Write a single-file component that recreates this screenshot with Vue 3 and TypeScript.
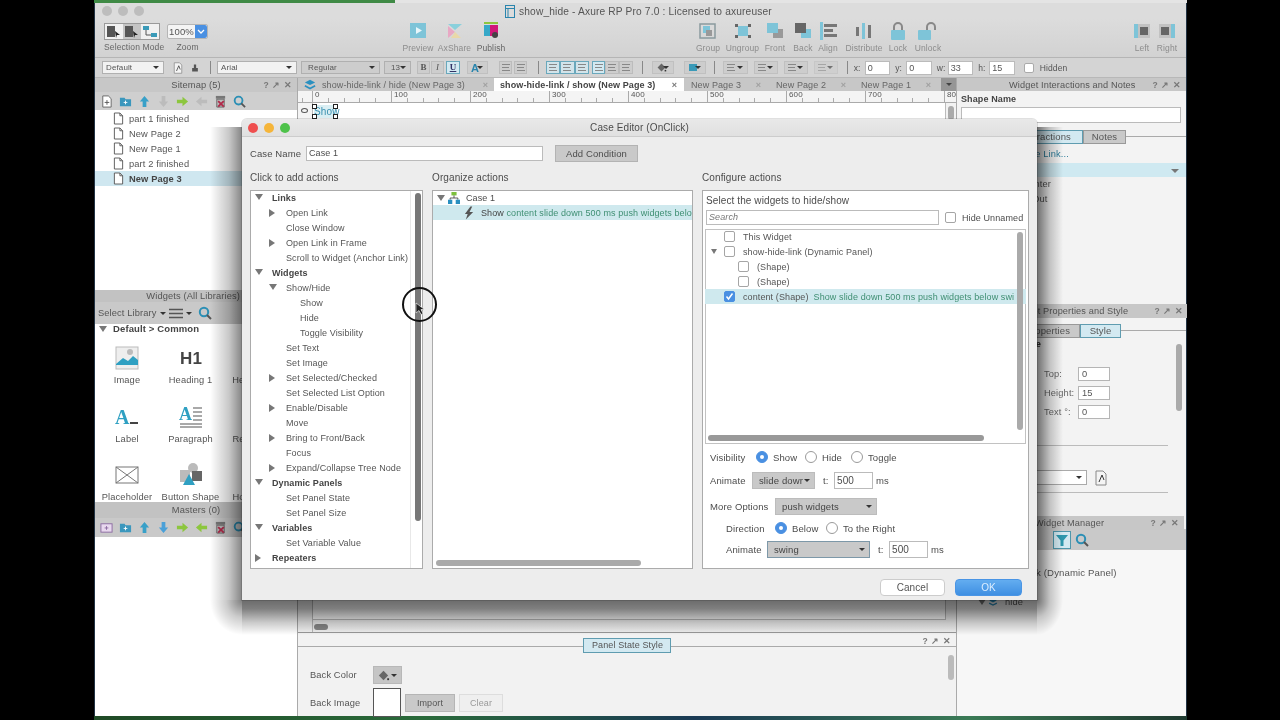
<script setup lang="ts">
interface Tool { label: string; icon: string; w: number }
interface TreeRow { text: string; lv: number; arrow?: 'down' | 'right'; bold?: boolean }

const toolsA: Tool[] = [
  { label: 'Preview', icon: 'preview', w: 36 },
  { label: 'AxShare', icon: 'axshare', w: 37 },
  { label: 'Publish', icon: 'publish', w: 36 },
]
const toolsB: Tool[] = [
  { label: 'Group', icon: 'group', w: 34 },
  { label: 'Ungroup', icon: 'ungroup', w: 35 },
  { label: 'Front', icon: 'front', w: 30 },
  { label: 'Back', icon: 'back', w: 26 },
  { label: 'Align', icon: 'align', w: 24 },
  { label: 'Distribute', icon: 'distribute', w: 48 },
  { label: 'Lock', icon: 'lock', w: 20 },
  { label: 'Unlock', icon: 'unlock', w: 40 },
]
const toolsC: Tool[] = [
  { label: 'Left', icon: 'pane-left', w: 24 },
  { label: 'Right', icon: 'pane-right', w: 26 },
]
const pages = ['part 1 finished', 'New Page 2', 'New Page 1', 'part 2 finished', 'New Page 3']
const sitemapIcons = ['i-addpage', 'i-folder', 'i-up', 'i-down-off', 'i-right', 'i-left-off', 'i-delete', 'i-search']
const masterIcons = ['i-addmaster', 'i-folder', 'i-up', 'i-down', 'i-right', 'i-left', 'i-delete', 'i-search']
const rulerMarks = [0, 100, 200, 300, 400, 500, 600, 700, 800]
const widgets = [
  { label: 'Image', icon: 'w-image' }, { label: 'Heading 1', icon: 'w-h1' }, { label: 'Heading 2', icon: 'w-h1' },
  { label: 'Label', icon: 'w-label' }, { label: 'Paragraph', icon: 'w-para' }, { label: 'Rectangle', icon: 'w-para' },
  { label: 'Placeholder', icon: 'w-place' }, { label: 'Button Shape', icon: 'w-button' }, { label: 'Horizontal', icon: 'w-button' },
]
const actions: TreeRow[] = [
  { text: 'Links', lv: 0, arrow: 'down', bold: true },
  { text: 'Open Link', lv: 1, arrow: 'right' },
  { text: 'Close Window', lv: 1 },
  { text: 'Open Link in Frame', lv: 1, arrow: 'right' },
  { text: 'Scroll to Widget (Anchor Link)', lv: 1 },
  { text: 'Widgets', lv: 0, arrow: 'down', bold: true },
  { text: 'Show/Hide', lv: 1, arrow: 'down' },
  { text: 'Show', lv: 2 },
  { text: 'Hide', lv: 2 },
  { text: 'Toggle Visibility', lv: 2 },
  { text: 'Set Text', lv: 1 },
  { text: 'Set Image', lv: 1 },
  { text: 'Set Selected/Checked', lv: 1, arrow: 'right' },
  { text: 'Set Selected List Option', lv: 1 },
  { text: 'Enable/Disable', lv: 1, arrow: 'right' },
  { text: 'Move', lv: 1 },
  { text: 'Bring to Front/Back', lv: 1, arrow: 'right' },
  { text: 'Focus', lv: 1 },
  { text: 'Expand/Collapse Tree Node', lv: 1, arrow: 'right' },
  { text: 'Dynamic Panels', lv: 0, arrow: 'down', bold: true },
  { text: 'Set Panel State', lv: 1 },
  { text: 'Set Panel Size', lv: 1 },
  { text: 'Variables', lv: 0, arrow: 'down', bold: true },
  { text: 'Set Variable Value', lv: 1 },
  { text: 'Repeaters', lv: 0, arrow: 'right', bold: true },
]
const tabs = [
  { text: 'New Page 3' }, { text: 'New Page 2' }, { text: 'New Page 1' },
]
</script>

<template>
  <div class="stage">
    <svg class="defs" width="0" height="0" aria-hidden="true">
      <defs>
        <symbol id="i-page" viewBox="0 0 12 14"><path d="M1.500 1h6l3 3v9h-9z" fill="#fff" stroke="#555" stroke-width="1"/><path d="M7.500 1v3h3" fill="none" stroke="#555"/></symbol>
        <symbol id="i-addpage" viewBox="0 0 14 14"><path d="M3 1h6l3 3v9H3z" fill="#fff" stroke="#666"/><path d="M5 8h5M7.500 5.500v5" stroke="#555"/></symbol>
        <symbol id="i-addmaster" viewBox="0 0 14 14"><rect x="1" y="3" width="12" height="9" fill="#e8d8ee" stroke="#8a6aa0"/><path d="M5 7.500h4M7 5.500v4" stroke="#8a6aa0"/></symbol>
        <symbol id="i-folder" viewBox="0 0 14 14"><path d="M1 3h5l1 1.500h6V12H1z" fill="#3b97bd"/><path d="M5 8h4M7 6v4" stroke="#fff"/></symbol>
        <symbol id="i-up" viewBox="0 0 14 14"><path d="M7 1l5 6H9v6H5V7H2z" fill="#38a0c8"/></symbol>
        <symbol id="i-down" viewBox="0 0 14 14"><path d="M7 13l5-6H9V1H5v6H2z" fill="#4aa0d8"/></symbol>
        <symbol id="i-down-off" viewBox="0 0 14 14"><path d="M7 13l5-6H9V1H5v6H2z" fill="#bcbcbc"/></symbol>
        <symbol id="i-right" viewBox="0 0 14 14"><path d="M13 7L7 2v3H1v4h6v3z" fill="#8cc63e"/></symbol>
        <symbol id="i-left" viewBox="0 0 14 14"><path d="M1 7l6-5v3h6v4H7v3z" fill="#8cc63e"/></symbol>
        <symbol id="i-left-off" viewBox="0 0 14 14"><path d="M1 7l6-5v3h6v4H7v3z" fill="#bcbcbc"/></symbol>
        <symbol id="i-delete" viewBox="0 0 14 14"><path d="M2 1h10v3H2z" fill="#777"/><path d="M3 4.500h8V13H3z" fill="#bbb" stroke="#666"/><path d="M4.500 6.500l6 6M10.500 6.500l-6 6" stroke="#b02a4a" stroke-width="2"/></symbol>
        <symbol id="i-search" viewBox="0 0 14 14"><circle cx="6" cy="6" r="4.200" fill="none" stroke="#2b8fb5" stroke-width="2"/><path d="M9 9l4 4" stroke="#555" stroke-width="2"/></symbol>
        <symbol id="preview" viewBox="0 0 22 18"><rect x="3" y="1" width="16" height="15" fill="#7ec4d8"/><path d="M9 5l6 3.500L9 12z" fill="#e8f6fa"/></symbol>
        <symbol id="axshare" viewBox="0 0 22 18"><path d="M4 2h14l-7 6z" fill="#8ad0dc"/><path d="M4 4l7 6-7 6z" fill="#e8a8c4"/><path d="M11 10l6 6H7z" fill="#e9d8a8"/></symbol>
        <symbol id="publish" viewBox="0 0 22 18"><rect x="4" y="0" width="14" height="2" fill="#8cc63e"/><rect x="4" y="3" width="6" height="11" fill="#36a8c8"/><rect x="10" y="3" width="8" height="11" fill="#d01878"/><circle cx="15" cy="13" r="3" fill="#444"/></symbol>
        <symbol id="group" viewBox="0 0 22 18"><rect x="3" y="2" width="15" height="14" fill="none" stroke="#8a9a9e" stroke-width="1.500"/><rect x="6" y="4" width="7" height="7" fill="#7ec4d8"/><rect x="9" y="8" width="6" height="6" fill="#999"/></symbol>
        <symbol id="ungroup" viewBox="0 0 22 18"><rect x="6" y="4" width="10" height="10" fill="#7ec4d8"/><path d="M3 2h3v3H3zM16 2h3v3h-3zM3 13h3v3H3zM16 13h3v3h-3z" fill="#666"/></symbol>
        <symbol id="front" viewBox="0 0 22 18"><rect x="9" y="7" width="10" height="9" fill="#999"/><rect x="3" y="1" width="11" height="10" fill="#7ec4d8"/></symbol>
        <symbol id="back" viewBox="0 0 22 18"><rect x="9" y="7" width="10" height="9" fill="#7ec4d8"/><rect x="3" y="1" width="11" height="10" fill="#666"/></symbol>
        <symbol id="align" viewBox="0 0 22 18"><rect x="3" y="0" width="3" height="18" fill="#7ec4d8"/><rect x="7" y="2" width="13" height="3" fill="#777"/><rect x="7" y="7" width="9" height="3" fill="#777"/><rect x="7" y="12" width="13" height="3" fill="#777"/></symbol>
        <symbol id="distribute" viewBox="0 0 22 18"><rect x="3" y="5" width="3" height="9" fill="#777"/><rect x="9" y="1" width="3" height="16" fill="#7ec4d8"/><rect x="15" y="3" width="3" height="13" fill="#777"/></symbol>
        <symbol id="lock" viewBox="0 0 22 18"><rect x="4" y="8" width="14" height="10" rx="1" fill="#7ec4d8"/><path d="M7 8V5a4 4 0 018 0v3" fill="none" stroke="#888" stroke-width="2"/></symbol>
        <symbol id="unlock" viewBox="0 0 22 18"><rect x="1" y="8" width="13" height="10" rx="1" fill="#7ec4d8"/><path d="M10 8V5a4 4 0 018 0v3" fill="none" stroke="#888" stroke-width="2"/></symbol>
        <symbol id="pane-left" viewBox="0 0 22 18"><rect x="3" y="2" width="16" height="14" fill="#c2c2c2"/><rect x="3" y="2" width="4" height="14" fill="#7ec4d8"/><rect x="9" y="5" width="8" height="8" fill="#666"/></symbol>
        <symbol id="pane-right" viewBox="0 0 22 18"><rect x="3" y="2" width="16" height="14" fill="#c2c2c2"/><rect x="15" y="2" width="4" height="14" fill="#7ec4d8"/><rect x="5" y="5" width="8" height="8" fill="#666"/></symbol>
        <symbol id="w-image" viewBox="0 0 24 24"><rect x="1" y="1" width="22" height="22" fill="#eee" stroke="#bbb"/><path d="M1 18l7-6 5 3 5-5 5 4v5H1z" fill="#2fa0c2"/><circle cx="15" cy="6" r="3" fill="#bbb"/></symbol>
        <symbol id="w-h1" viewBox="0 0 24 24"><text x="12" y="18" text-anchor="middle" font-family="Liberation Sans, sans-serif" font-weight="700" font-size="17" fill="#444">H1</text></symbol>
        <symbol id="w-label" viewBox="0 0 24 24"><text x="0" y="19" font-family="Liberation Serif, serif" font-weight="700" font-size="20" fill="#2fa0c2">A</text><rect x="15" y="17" width="8" height="2" fill="#444"/></symbol>
        <symbol id="w-para" viewBox="0 0 24 24"><text x="0" y="15" font-family="Liberation Serif, serif" font-weight="700" font-size="18" fill="#2fa0c2">A</text><path d="M14 3h9M14 7h9M14 11h9M14 15h9M1 19h22M1 22h22" stroke="#555" stroke-width="1.200"/></symbol>
        <symbol id="w-place" viewBox="0 0 24 24"><rect x="1" y="4" width="22" height="16" fill="#fff" stroke="#777"/><path d="M1 4l22 16M23 4L1 20" stroke="#777"/></symbol>
        <symbol id="w-button" viewBox="0 0 24 24"><rect x="1" y="7" width="10" height="12" fill="#bbb"/><circle cx="14" cy="5" r="5" fill="#bbb"/><rect x="13" y="8" width="10" height="10" fill="#666"/><path d="M10 11l6 11H4z" fill="#2fa0c2"/></symbol>
        <symbol id="i-case" viewBox="0 0 14 14"><rect x="4" y="0" width="6" height="4" fill="#7cc03c"/><path d="M7 4v3M2.500 9V7h9v2" fill="none" stroke="#444"/><rect x="0" y="9" width="5" height="5" fill="#2a90c0"/><rect x="9" y="9" width="5" height="5" fill="#2a90c0"/></symbol>
        <symbol id="i-bolt" viewBox="0 0 12 14"><path d="M7 0L1 8h3l-2 6 8-8H6l3-6z" fill="#555"/></symbol>
        <symbol id="i-filter" viewBox="0 0 14 14"><path d="M1 2h12L8.500 7.500V13h-3V7.500z" fill="#2e97ad"/></symbol>
        <symbol id="i-note" viewBox="0 0 14 16"><path d="M2 1h7l3 3v11H2z" fill="#f4f4f4" stroke="#888"/><path d="M5 12l3-7 2 5" fill="none" stroke="#333"/></symbol>
        <symbol id="i-bucket" viewBox="0 0 14 14"><path d="M2 7l5-5 5 5-5 5z" fill="#666"/><path d="M12 10v2" stroke="#333" stroke-width="2"/></symbol>
        <symbol id="i-tree" viewBox="0 0 14 14"><path d="M7 1L1 4l6 3 6-3z" fill="#2a90c0"/><path d="M1 8l6 3 6-3" fill="none" stroke="#2a90c0" stroke-width="2"/></symbol>
      </defs>
    </svg>

    <div class="screen">
      <div class="desk-top"></div>
      <div class="window">
        <!-- title -->
        <div class="titlebar">
          <span class="lights"><i></i><i></i><i></i></span>
          <span class="doc"><svg width="10" height="13" viewBox="0 0 10 13"><rect x=".5" y=".5" width="9" height="12" fill="none" stroke="#2a85ad"/><path d="M0 3.500h10M3 3.500v9" stroke="#2a85ad"/></svg></span>
          <span class="title-text">show_hide - Axure RP Pro 7.0 : Licensed to axureuser</span>
        </div>

        <!-- toolbar -->
        <div class="toolbar">
          <div class="sel-mode">
            <div class="seg">
              <span><svg width="16" height="14" viewBox="0 0 16 14"><rect x="1" y="1" width="8" height="11" fill="#555"/><path d="M9 6l5 4-3 0-1 3z" fill="#222"/></svg></span>
              <span class="on"><svg width="16" height="14" viewBox="0 0 16 14"><rect x="1" y="1" width="8" height="11" fill="#555"/><path d="M9 6l5 4-3 0-1 3z" fill="#222"/></svg></span>
              <span><svg width="16" height="14" viewBox="0 0 16 14"><rect x="1" y="1" width="6" height="4" fill="#3a9ab8"/><rect x="9" y="8" width="6" height="4" fill="#3a9ab8"/><path d="M4 5v5h5" fill="none" stroke="#555"/></svg></span>
            </div>
            <div class="tool-label">Selection Mode</div>
          </div>
          <div class="zoom-box">
            <div class="zoom-ctl"><span class="zoom-val">100%</span><span class="zoom-btn"><svg width="8" height="6" viewBox="0 0 8 6"><path d="M1 1l3 3 3-3" fill="none" stroke="#fff" stroke-width="1.300"/></svg></span></div>
            <div class="tool-label">Zoom</div>
          </div>
          <div class="tools tools-a">
            <div v-for="t in toolsA" :key="t.label" class="tool" :class="{ dim: t.label !== 'Publish' }" :style="{ width: t.w + 'px' }">
              <svg width="22" height="18"><use :href="'#' + t.icon" /></svg>
              <div class="tool-label">{{ t.label }}</div>
            </div>
          </div>
          <div class="tools tools-b">
            <div v-for="t in toolsB" :key="t.label" class="tool dim" :style="{ width: t.w + 'px' }">
              <svg width="22" height="18"><use :href="'#' + t.icon" /></svg>
              <div class="tool-label">{{ t.label }}</div>
            </div>
          </div>
          <div class="tools tools-c">
            <div v-for="t in toolsC" :key="t.label" class="tool dim" :style="{ width: t.w + 'px' }">
              <svg width="22" height="18"><use :href="'#' + t.icon" /></svg>
              <div class="tool-label">{{ t.label }}</div>
            </div>
          </div>
        </div>

        <!-- format bar -->
        <div class="format">
          <span class="fsel f-default">Default<b class="car"></b></span>
          <svg class="fi f-a" width="12" height="12" viewBox="0 0 14 16"><use href="#i-note" /></svg>
          <svg class="fi f-b" width="8" height="12" viewBox="0 0 14 14"><path d="M5 1h4v6h3v6H2V7h3z" fill="#555"/></svg>
          <span class="sep f-s1"></span>
          <span class="fsel f-arial">Arial<b class="car"></b></span>
          <span class="fsel grey f-regular">Regular<b class="car"></b></span>
          <span class="fsel grey f-size">13<b class="car"></b></span>
          <span class="fbtn f-bold">B</span>
          <span class="fbtn f-ital">I</span>
          <span class="fbtn f-under">U</span>
          <span class="fcolor f-col1"><em>A</em><b class="car"></b></span>
          <span class="fbtn f-list"><i class="lines"></i></span>
          <span class="fbtn f-link"><i class="lines"></i></span>
          <span class="sep f-s2"></span>
          <span class="fbtn al"><i class="lines"></i></span>
          <span class="fbtn al"><i class="lines"></i></span>
          <span class="fbtn al"><i class="lines"></i></span>
          <span class="fbtn al2 hl"><i class="lines"></i></span>
          <span class="fbtn al2"><i class="lines"></i></span>
          <span class="fbtn al2"><i class="lines"></i></span>
          <span class="sep f-s3"></span>
          <span class="fcolor f-col2"><svg width="11" height="11"><use href="#i-bucket" /></svg><b class="car"></b></span>
          <span class="fcolor f-col3"><i class="swatch"></i><b class="car"></b></span>
          <span class="sep f-s4"></span>
          <span class="fcolor f-col4"><i class="lines"></i><b class="car"></b></span>
          <span class="fcolor f-col5"><i class="lines"></i><b class="car"></b></span>
          <span class="fcolor f-col5"><i class="lines"></i><b class="car"></b></span>
          <span class="fcolor f-col6"><i class="lines"></i><b class="car"></b></span>
          <span class="sep f-s5"></span>
          <label class="coord cx">x:<span>0</span></label>
          <label class="coord">y:<span>0</span></label>
          <label class="coord">w:<span>33</span></label>
          <label class="coord">h:<span>15</span></label>
          <span class="hidden-box"></span><span class="hidden-txt">Hidden</span>
        </div>

        <!-- workspace -->
        <div class="work">
          <!-- left -->
          <aside class="col-left">
            <div class="phead ph-site"><span>Sitemap (5)</span><span class="pctl">? ↗ ✕</span></div>
            <div class="picons">
              <svg v-for="ic in sitemapIcons" :key="ic" width="13" height="13"><use :href="'#' + ic" /></svg>
            </div>
            <ul class="pages">
              <li v-for="(p, i) in pages" :key="p" :class="{ sel: i === 4 }">
                <svg width="11" height="13"><use href="#i-page" /></svg>{{ p }}
              </li>
            </ul>
            <div class="phead ph-widgets"><span>Widgets (All Libraries)</span></div>
            <div class="libbar">
              <span>Select Library</span><b class="car"></b>
              <svg width="14" height="11" viewBox="0 0 14 11"><path d="M0 1.500h14M0 5.500h14M0 9.500h14" stroke="#555" stroke-width="1.300"/></svg><b class="car"></b>
              <svg class="libsearch" width="13" height="13"><use href="#i-search" /></svg>
            </div>
            <div class="lib-body">
              <div class="lib-title"><b class="tri down"></b>Default &gt; Common</div>
              <div class="lib-grid">
                <div v-for="w in widgets" :key="w.label" class="lib-item">
                  <svg width="24" height="24"><use :href="'#' + w.icon" /></svg>
                  <span>{{ w.label }}</span>
                </div>
              </div>
            </div>
            <div class="phead ph-masters"><span>Masters (0)</span></div>
            <div class="picons mi">
              <svg v-for="ic in masterIcons" :key="ic" width="13" height="13"><use :href="'#' + ic" /></svg>
            </div>
            <div class="blank"></div>
          </aside>

          <!-- center -->
          <main class="col-center">
            <div class="tabs">
              <span class="tab-home"><svg width="14" height="12"><use href="#i-tree" /></svg></span>
              <span class="tab t1">show-hide-link / hide (New Page 3)<i>×</i></span>
              <span class="tab active">show-hide-link / show (New Page 3)<i>×</i></span>
              <span v-for="t in tabs" :key="t.text" class="tab plain">{{ t.text }}<i>×</i></span>
              <span class="tab-more"><b class="car"></b></span>
            </div>
            <div class="ruler">
              <span v-for="m in rulerMarks" :key="m">{{ m }}</span>
            </div>
            <div class="canvas">
              <div class="v-ruler"><span class="eye"></span></div>
              <div class="canvas-area">
                <div class="show-wid">Show<i class="h1"></i><i class="h2"></i><i class="h3"></i><i class="h4"></i></div>
              </div>
              <div class="canvas-scroll"></div>
              <div class="hscroll"></div>
            </div>
            <div class="state-panel">
              <div class="state-ctl">? ↗ ✕</div>
              <div class="state-tabline"><span class="state-tab">Panel State Style</span></div>
              <div class="state-body">
                <div class="state-row r-color"><label>Back Color</label><span class="bucket"><svg width="13" height="13"><use href="#i-bucket" /></svg><b class="car"></b></span></div>
                <div class="state-row r-img"><label>Back Image</label><span class="thumb"></span><span class="ibtn">Import</span><span class="ibtn off">Clear</span></div>
              </div>
              <div class="state-scroll"></div>
            </div>
          </main>

          <!-- right -->
          <aside class="col-right">
            <div class="phead ph-right"><span>Widget Interactions and Notes</span><span class="pctl">? ↗ ✕</span></div>
            <div class="inter">
              <div class="shape-label">Shape Name</div>
              <div class="shape-input"></div>
              <div class="rtabs r1"><span class="rtab on t-int">Interactions</span><span class="rtab t-notes">Notes</span></div>
              <div class="rlink">Create Link...</div>
              <div class="rsel">OnClick<b class="car"></b></div>
              <div class="rev">OnMouseEnter</div>
              <div class="rev ev2">OnMouseOut</div>
            </div>
            <div class="phead ph-right h2"><span>Widget Properties and Style</span><span class="pctl">? ↗ ✕</span></div>
            <div class="props">
              <div class="rtabs r2"><span class="rtab t-prop">Properties</span><span class="rtab on t-style">Style</span></div>
              <div class="prop-title">Size</div>
              <div class="prop-row p1"><label>Top:</label><span>0</span></div>
              <div class="prop-row"><label>Height:</label><span>15</span></div>
              <div class="prop-row"><label>Text °:</label><span>0</span></div>
              <div class="rule r-a"></div>
              <div class="prop-sel"><span class="selbox"><b class="car"></b></span><svg width="14" height="16"><use href="#i-note" /></svg></div>
              <div class="rule r-b"></div>
              <div class="prop-scroll"></div>
            </div>
            <div class="phead ph-right h3"><span>Widget Manager</span><span class="pctl">? ↗ ✕</span></div>
            <div class="wm-bar"><span class="filter"><svg width="14" height="14"><use href="#i-filter" /></svg></span><svg width="14" height="14"><use href="#i-search" /></svg></div>
            <div class="wm-list">
              <div class="wm-1">show-hide-link (Dynamic Panel)</div>
              <div class="wm-2"><b class="tri down"></b><svg width="10" height="9"><use href="#i-tree" /></svg>hide</div>
            </div>
          </aside>
        </div>
      </div>
      <div class="desk-bottom"></div>

      <!-- soft shadow under the dialog -->
      <div class="dlg-shadow"></div>

      <!-- Case editor dialog -->
      <section class="dialog">
        <header class="dlg-title">
          <span class="lights color"><i></i><i></i><i></i></span>
          <span>Case Editor (OnClick)</span>
        </header>
        <div class="case-row">
          <label>Case Name</label>
          <span class="case-input">Case 1</span>
          <span class="add-cond">Add Condition</span>
        </div>
        <div class="cols">
          <div class="col c-left">
            <h3>Click to add actions</h3>
            <div class="box tree">
              <div v-for="r in actions" :key="r.text" class="trow" :class="['lv' + r.lv, { strong: r.bold }]">
                <b v-if="r.arrow" class="tri" :class="r.arrow"></b>{{ r.text }}
              </div>
              <div class="tree-rule"></div>
              <div class="tree-scroll"></div>
            </div>
          </div>
          <div class="col c-mid">
            <h3>Organize actions</h3>
            <div class="box org">
              <div class="case-node"><b class="tri down"></b><svg width="12" height="12"><use href="#i-case" /></svg><span>Case 1</span></div>
              <div class="case-act"><svg width="11" height="14"><use href="#i-bolt" /></svg><span>Show <em>content slide down 500 ms push widgets belo</em></span></div>
              <div class="org-scroll"></div>
            </div>
          </div>
          <div class="col c-right">
            <h3>Configure actions</h3>
            <div class="box conf">
              <div class="conf-head">Select the widgets to hide/show</div>
              <div class="conf-search">
                <span class="search-in">Search</span>
                <span class="cb"></span><span>Hide Unnamed</span>
              </div>
              <div class="w-list">
                <div class="wrow w0"><span class="cb"></span>This Widget</div>
                <div class="wrow w0"><b class="tri down"></b><span class="cb"></span>show-hide-link (Dynamic Panel)</div>
                <div class="wrow w1"><span class="cb"></span>(Shape)</div>
                <div class="wrow w1"><span class="cb"></span>(Shape)</div>
                <div class="wrow w0 picked"><span class="cb on"><svg width="9" height="9" viewBox="0 0 9 9"><path d="M1.500 4.500l2 2.500 4-5.500" fill="none" stroke="#fff" stroke-width="1.500"/></svg></span>content (Shape)<em>Show slide down 500 ms push widgets below swi</em></div>
                <div class="wl-vs"></div>
                <div class="wl-hs"></div>
              </div>
              <div class="opt o1"><label class="lbl-a">Visibility</label><span class="rad on"></span><span class="rtxt t-show">Show</span><span class="rad"></span><span class="rtxt t-hide">Hide</span><span class="rad"></span><span class="rtxt">Toggle</span></div>
              <div class="opt o2"><label class="lbl-e">Animate</label><span class="dd dd-s">slide dowr<b class="car"></b></span><span class="t">t:</span><span class="num">500</span><span class="ms">ms</span></div>
              <div class="opt o3"><label class="lbl-b">More Options</label><span class="dd dd-m">push widgets<b class="car"></b></span></div>
              <div class="opt o4"><label class="lbl-c">Direction</label><span class="rad on"></span><span class="rtxt t-below">Below</span><span class="rad"></span><span class="rtxt">To the Right</span></div>
              <div class="opt o5"><label class="lbl-d">Animate</label><span class="dd dd-w">swing<b class="car"></b></span><span class="t">t:</span><span class="num">500</span><span class="ms">ms</span></div>
            </div>
          </div>
        </div>
        <footer class="dlg-foot">
          <span class="btn">Cancel</span>
          <span class="btn ok">OK</span>
        </footer>
      </section>

      <!-- recording cursor -->
      <div class="ring"><svg width="10" height="14" viewBox="0 0 10 14"><path d="M1 1v10l3-2.500 2 4 2-1-2-4h3.500z" fill="#222" stroke="#fff" stroke-width=".6"/></svg></div>
    </div>
  </div>
</template>

<style>
html, body { margin: 0; padding: 0; background: #000; overflow: hidden; }
</style>

<style scoped>
.stage { width: 1280px; height: 720px; background: #000; font-family: "Liberation Sans", Arial, sans-serif; font-size: 9.3px; color: #555; letter-spacing: .12px; overflow: hidden; }
.defs { position: absolute; }
.screen { position: relative; width: 1093px; height: 720px; margin-left: 94px; display: flex; flex-direction: column; background: #234; filter: blur(.4px); overflow: hidden; }
.desk-top { height: 3px; background: linear-gradient(90deg, #3f8a45 0 27.500%, #e4e4e4 27.500% 100%); flex: none; }
.desk-bottom { height: 4px; flex: none; background: linear-gradient(90deg, #1f4a26, #2a6a3a 30%, #1a3a55 55%, #3a7a55 80%, #1f3a30); }
.window { margin: 0 1px; flex: 1; min-height: 0; display: flex; flex-direction: column; background: #eee; }

.lights { display: flex; gap: 6px; }
.lights i { width: 10px; height: 10px; border-radius: 50%; background: #bdbdbd; border: 0; display: block; }
.titlebar { height: 16px; flex: none; position: relative; display: flex; align-items: center; background: #dcdcdc; padding-left: 7px; }
.doc { margin-left: 361px; margin-right: 4px; display: flex; }
.title-text { font-size: 10.2px; color: #555; letter-spacing: .15px; }

.toolbar { height: 38px; flex: none; display: flex; background: linear-gradient(#dcdcdc, #d2d2d2); border-bottom: 1px solid #b5b5b5; box-sizing: content-box; }
.tool-label { font-size: 8.5px; color: #666; line-height: 10px; white-space: nowrap; text-align: center; }
.sel-mode { margin-left: 9px; width: 56px; padding-top: 4px; }
.seg { display: flex; height: 17px; border: 1px solid #9a9a9a; background: #f1f1f1; margin-bottom: 2px; box-sizing: border-box; }
.seg span { flex: 1; display: flex; align-items: center; justify-content: center; }
.seg .on { background: #c4c4c4; }
.zoom-box { margin-left: 7px; width: 41px; padding-top: 5px; }
.zoom-ctl { height: 15px; display: flex; border: 1px solid #b5b5b5; background: #f4f4f4; border-radius: 2px; margin-bottom: 3px; box-sizing: border-box; }
.zoom-val { flex: 1; font-size: 9.5px; line-height: 13px; text-align: center; }
.zoom-btn { width: 12px; background: #4a90e2; display: flex; align-items: center; justify-content: center; border-radius: 0 2px 2px 0; }
.tools { display: flex; }
.tool { display: flex; flex-direction: column; align-items: center; padding-top: 3px; box-sizing: border-box; }
.tool svg { margin-bottom: 3px; }
.tool.dim .tool-label { color: #8c8c8c; }
.tools-a { margin-left: 192px; }
.tools-b { margin-left: 182px; }
.tools-c { margin-left: 182px; }

.format { height: 19px; flex: none; display: flex; align-items: center; background: #d4d4d4; padding-left: 7px; border-bottom: 1px solid #b8b8b8; box-sizing: content-box; }
.fsel { height: 13px; line-height: 12px; font-size: 8px; color: #555; background: #f2f2f2; border: 1px solid #b0b0b0; box-sizing: border-box; padding-left: 3px; position: relative; display: block; flex: none; }
.fsel.grey { background: #cdcdcd; padding-left: 6px; }
.car { position: absolute; right: 4px; top: 50%; margin-top: -1.500px; width: 0; height: 0; border-left: 3px solid transparent; border-right: 3px solid transparent; border-top: 3px solid #333; }
.f-default { width: 62px; }
.fi { flex: none; }
.f-a { margin-left: 8px; }
.f-b { margin-left: 7px; }
.sep { width: 1px; height: 13px; background: #888; flex: none; }
.f-s1 { margin: 0 6px 0 11px; }
.f-arial { width: 80px; }
.f-regular { width: 79px; margin-left: 4px; }
.f-size { width: 27px; margin-left: 4px; }
.fbtn { height: 13px; width: 13px; flex: none; margin-left: 1px; background: #cdcdcd; border: 1px solid #bcbcbc; box-sizing: border-box; font: 700 9px "Liberation Serif", serif; line-height: 11px; text-align: center; color: #555; display: flex; align-items: center; justify-content: center; }
.f-bold { margin-left: 6px; }
.f-ital { font-style: italic; font-weight: 400; }
.f-under { text-decoration: underline; background: #d3e9f1; border-color: #6aa8bc; width: 14px; margin-left: 2px; color: #336; }
.fcolor { height: 13px; flex: none; position: relative; display: flex; align-items: center; padding-left: 3px; background: #cdcdcd; box-sizing: border-box; border: 1px solid #c0c0c0; }
.fcolor em { font: 700 11px "Liberation Sans", sans-serif; color: #2a85ad; }
.f-col1 { width: 21px; margin-left: 7px; }
.f-list { margin-left: 11px; }
.f-link { margin-left: 2px; }
.f-s2 { margin: 0 7px 0 11px; }
.lines { display: block; width: 8px; height: 7px; border-top: 1px solid #888; border-bottom: 1px solid #888; position: relative; box-sizing: border-box; }
.lines::after { content: ""; position: absolute; left: 0; right: 1px; top: 2px; height: 1px; background: #888; }
.al { width: 14.300px; margin-left: 0; border-color: #6aa8bc; background: #d3e4ea; }
.al2 { width: 13.600px; margin-left: 0; border-color: #bcbcbc; background: #cdcdcd; }
.al + .al2 { margin-left: 3px; }
.al2.hl { background: #d3e9f1; border-color: #6aa8bc; }
.f-s3 { margin: 0 9px 0 9px; }
.f-col2 { width: 22px; }
.f-col3 { width: 22px; margin-left: 10px; }
.swatch { display: block; width: 8px; height: 7px; background: #3a9ab8; margin-left: 1px; }
.f-s4 { margin: 0 8px; }
.f-col4 { width: 25px; }
.f-col5 { width: 24px; margin-left: 6px; }
.f-col6 { width: 24px; margin-left: 6px; opacity: .6; }
.f-s5 { margin: 0 6px 0 9px; }
.coord { display: flex; align-items: center; font-size: 8.5px; flex: none; margin-left: 5px; width: 36.500px; justify-content: space-between; }
.coord span { width: 25.500px; height: 14px; box-sizing: border-box; background: #fff; border: 1px solid #bbb; font-size: 9px; line-height: 12px; padding-left: 2px; color: #555; }
.cx { margin-left: 0; }
.hidden-box { width: 10px; height: 10px; border: 1px solid #aaa; border-radius: 2px; background: #fff; margin-left: 9px; box-sizing: border-box; flex: none; }
.hidden-txt { font-size: 8.5px; margin-left: 6px; }

.work { flex: 1; min-height: 0; display: grid; grid-template-columns: 203px 658px 230px; }
.phead { background: #c7c7c7; display: flex; align-items: center; justify-content: center; position: relative; color: #555; flex: none; }
.pctl { position: absolute; right: 5px; top: 50%; transform: translateY(-50%); font-size: 8.5px; color: #777; font-weight: 700; word-spacing: 1px; }
.col-left { display: flex; flex-direction: column; background: #fff; min-height: 0; border-right: 1px solid #aaa; box-sizing: border-box; }
.ph-site { height: 14px; }
.picons { height: 18px; background: #cfcfcf; display: flex; align-items: center; gap: 6px; padding-left: 5px; flex: none; }
.picons svg { flex: none; }
.mi { height: 19px; background: #c9c9c9; }
.pages { height: 180px; margin: 0; padding: 1px 0 0; list-style: none; flex: none; box-sizing: border-box; }
.pages li { height: 15px; display: flex; align-items: center; padding-left: 18px; gap: 5px; color: #555; }
.pages svg { flex: none; }
.pages .sel { background: #cfe7f0; font-weight: 700; color: #444; }
.ph-widgets { height: 12px; justify-content: flex-end; padding-right: 57px; background: #c2c2c2; }
.libbar { height: 22px; background: #c9c9c9; position: relative; display: flex; align-items: center; padding-left: 3px; flex: none; }
.libbar .car { position: static; margin: 0 3px 0 3px; display: inline-block; }
.libbar > span { white-space: nowrap; }
.libbar svg { flex: none; }
.libsearch { margin-left: 3px; width: 14px; height: 14px; }
.lib-body { height: 178px; flex: none; overflow: hidden; background: #fff; }
.lib-title { font-weight: 700; font-size: 9.5px; color: #444; height: 12px; margin-top: -1px; padding-top: 0; padding-left: 18px; position: relative; line-height: 12px; }
.lib-title .tri { left: 4px; top: 3px; }
.lib-grid { display: grid; grid-template-columns: 64px 63px 64px; grid-auto-rows: 58.500px; margin-top: 11px; }
.lib-item { display: flex; flex-direction: column; align-items: center; gap: 5px; white-space: nowrap; }
.lib-item span { line-height: 10px; }
.ph-masters { height: 16px; background: #c2c2c2; padding-right: 0; }
.blank { flex: 1; background: #fff; }

.col-center { display: flex; flex-direction: column; min-height: 0; }
.tabs { height: 13px; display: flex; background: #c7c7c7; flex: none; align-items: stretch; white-space: nowrap; font-size: 9px; }
.tab-home { width: 24px; display: flex; align-items: center; justify-content: center; }
.tab { position: relative; color: #666; display: flex; align-items: center; letter-spacing: .1px; }
.tab i { font-style: normal; font-weight: 700; color: #a0a0a0; position: absolute; }
.t1 { width: 172px; }
.t1 i { right: 6px; }
.active { background: #fff; width: 190px; font-weight: 700; color: #444; padding-left: 6px; box-sizing: border-box; }
.active i { right: 7px; color: #777; }
.plain { width: 85px; padding-left: 7px; box-sizing: border-box; }
.plain i { right: 8px; }
.tab-more { flex: 1; background: #969696; position: relative; margin-left: 2px; }
.tab-more .car { border-top-color: #444; right: 4px; }
.ruler { height: 12px; background: #f4f4f4; border-bottom: 1px solid #aaa; display: flex; padding-left: 14px; flex: none; font-size: 8px; color: #555; background-image: repeating-linear-gradient(90deg, #aaa 0 1px, transparent 1px 15.800px); background-size: 100% 4px; background-repeat: repeat-x; background-position: 14px bottom; box-sizing: border-box; }
.ruler span { width: 79px; flex: none; padding-left: 2px; box-sizing: border-box; line-height: 8px; border-left: 1px solid #aaa; height: 12px; }
.canvas { flex: 1; min-height: 0; position: relative; display: flex; background: #f2f2f2; }
.v-ruler { width: 14px; background: #f4f4f4; border-right: 1px solid #bbb; flex: none; position: relative; }
.eye { position: absolute; left: 3px; top: 5px; width: 5px; height: 3px; border: 1px solid #555; border-radius: 50%; }
.canvas-area { flex: 1; background: #fff; margin: 0 10px 12px 0; border: solid #bbb; border-width: 0 1px 1px 0; }
.show-wid { position: absolute; left: 16px; top: 2px; width: 22px; height: 13px; color: #3a90b0; font-size: 10px; line-height: 13px; background: #d9eef3; }
.show-wid i { position: absolute; width: 3px; height: 3px; border: 1px solid #222; background: #fff; }
.h1 { left: -2px; top: -1px; } .h2 { right: -2px; top: -1px; } .h3 { left: -2px; bottom: -1px; } .h4 { right: -2px; bottom: -1px; }
.canvas-scroll { position: absolute; right: 2px; top: 3px; width: 6px; height: 14px; background: #aaa; border-radius: 3px; }
.hscroll { position: absolute; left: 16px; bottom: 2px; width: 14px; height: 6px; background: #888; border-radius: 3px; }
.state-panel { height: 84px; flex: none; background: #f2f2f2; border-top: 1px solid #999; position: relative; box-sizing: border-box; }
.state-ctl { position: absolute; right: 5px; top: 3px; font-size: 8.5px; color: #777; font-weight: 700; word-spacing: 1px; }
.state-tabline { height: 13px; border-bottom: 1px solid #aaa; display: flex; justify-content: center; position: relative; margin-top: 0; }
.state-tab { height: 15px; line-height: 13px; padding: 0 8px; width: 88px; box-sizing: border-box; text-align: center; border: 1px solid #5f9cb0; background: #d3e9f1; position: relative; top: 5px; white-space: nowrap; font-size: 9px; }
.state-body { padding: 19px 0 0 12px; }
.state-row { display: flex; align-items: center; }
.state-row label { width: 63px; flex: none; }
.r-color { height: 18px; margin-bottom: 4px; }
.r-img { height: 29px; }
.bucket { width: 29px; height: 18px; background: #c5c5c5; display: flex; align-items: center; padding-left: 3px; box-sizing: border-box; position: relative; border: 1px solid #b8b8b8; }
.thumb { width: 28px; height: 29px; box-sizing: border-box; background: #fff; border: 1px solid #555; flex: none; }
.ibtn { width: 50px; height: 18px; box-sizing: border-box; line-height: 16px; text-align: center; background: #c9c9c9; border: 1px solid #b5b5b5; margin-left: 4px; font-size: 9px; }
.ibtn.off { background: #efefef; color: #999; border-color: #ddd; width: 44px; }
.state-scroll { position: absolute; right: 2px; top: 22px; width: 6px; height: 25px; border-radius: 3px; background: #bbb; }

.col-right { display: flex; flex-direction: column; background: #f3f3f3; min-height: 0; border-left: 1px solid #aaa; box-sizing: border-box; }
.ph-right { height: 13px; justify-content: flex-start; padding-left: 52px; font-size: 9.2px; }
.inter { height: 214px; flex: none; position: relative; background: #f3f3f3; padding-left: 4px; box-sizing: border-box; }
.shape-label { font-weight: 700; color: #444; height: 16px; line-height: 17px; font-size: 9px; }
.shape-input { height: 16px; width: 220px; background: #fff; border: 1px solid #bbb; box-sizing: border-box; }
.rtabs { display: flex; justify-content: flex-end; align-items: flex-end; position: relative; }
.rtabs::after { content: ""; position: absolute; left: -4px; right: 0; top: 6px; height: 1px; background: #aaa; z-index: 0; }
.r1 { height: 14px; margin: 7px 0 0 -4px; padding-right: 60px; }
.r2 { height: 14px; margin: 5px 0 0; padding-right: 65px; }
.rtab { height: 14px; box-sizing: border-box; line-height: 12px; border: 1px solid #999; background: #c9c9c9; text-align: center; font-size: 9.5px; position: relative; z-index: 1; }
.rtab.on { background: #d3e9f1; border-color: #5f9cb0; }
.t-int { width: 84px; text-align: right; padding-right: 11px; } .t-notes { width: 43px; } .t-prop { width: 80px; text-align: right; padding-right: 9px; } .t-style { width: 41px; }
.rlink { color: #2d7d9a; margin: 3px 0 0 51px; height: 16px; line-height: 14px; }
.rsel { height: 14px; background: #cfe9f1; margin-left: -4px; padding-left: 20px; line-height: 14px; position: relative; }
.rsel .car { right: 7px; border-left-width: 4px; border-right-width: 4px; border-top-width: 4px; border-top-color: #777; }
.rev { margin-left: 26px; height: 15px; line-height: 15px; }
.ev2 { margin-left: 30px; }
.ph-right.h2 { height: 14px; } .ph-right.h3 { height: 14px; padding-left: 80px; }
.props { height: 196px; flex: none; position: relative; box-sizing: border-box; }
.prop-title { font-weight: 700; color: #333; position: absolute; left: 65px; top: 20px; }
.prop-row { display: flex; align-items: center; height: 14px; margin: 5px 0 0 87px; gap: 0; }
.prop-row label { width: 34px; flex: none; color: #666; }
.prop-row span { width: 32px; height: 14px; box-sizing: border-box; background: #fff; border: 1px solid #b5b5b5; line-height: 12px; padding-left: 3px; }
.p1 { margin-top: 29px; }
.rule { height: 1px; background: #bbb; width: 211px; }
.r-a { margin-top: 26px; }
.prop-sel { height: 15px; display: flex; align-items: center; gap: 7px; margin: 24px 0 0 0; }
.selbox { width: 130px; height: 15px; background: #fff; border: 1px solid #aaa; box-sizing: border-box; position: relative; display: block; }
.r-b { margin-top: 7px; }
.prop-scroll { position: absolute; right: 4px; top: 25px; width: 6px; height: 67px; background: #aaa; border-radius: 3px; }
.wm-bar { height: 21px; background: #c9c9c9; display: flex; align-items: center; padding-left: 96px; gap: 4px; flex: none; }
.filter { width: 18px; height: 18px; display: flex; align-items: center; justify-content: center; background: #d3e9f1; border: 1px solid #4f97ac; box-sizing: border-box; }
.wm-list { flex: 1; background: #f7f7f7; padding: 16px 0 0 21px; }
.wm-1 { height: 14px; line-height: 14px; margin-left: 0; font-size: 9.6px; }
.wm-2 { display: flex; align-items: center; height: 14px; margin-top: 15px; position: relative; }
.wm-2 .tri { position: relative; left: auto; top: auto; }
.wm-2 svg { margin: 0 7px 0 2px; }

.tri { position: absolute; width: 0; height: 0; display: block; }
.tri.down { border-left: 4px solid transparent; border-right: 4px solid transparent; border-top: 6px solid #777; }
.tri.right { border-top: 4px solid transparent; border-bottom: 4px solid transparent; border-left: 6px solid #777; }

/* dialog shadow: a painted falloff around the dialog's left, right and bottom edges */
.dlg-shadow {
  position: absolute; z-index: 4; left: 116px; top: 127px; width: 857px; height: 508px;
  background-repeat: no-repeat;
  background-image:
    linear-gradient(to bottom, rgba(0,0,0,.58), rgba(0,0,0,.5) 25%, rgba(0,0,0,.2) 65%, rgba(0,0,0,0)),
    linear-gradient(to left, rgba(0,0,0,.48), rgba(0,0,0,.22) 40%, rgba(0,0,0,0)),
    linear-gradient(to right, rgba(0,0,0,.55), rgba(0,0,0,.2) 50%, rgba(0,0,0,0)),
    radial-gradient(100% 100% at 100% 0, rgba(0,0,0,.5), rgba(0,0,0,.2) 50%, rgba(0,0,0,0)),
    radial-gradient(100% 100% at 0 0, rgba(0,0,0,.55), rgba(0,0,0,.2) 50%, rgba(0,0,0,0)),
    linear-gradient(to bottom, rgba(0,0,0,0), #000),
    linear-gradient(to bottom, rgba(0,0,0,0), #000);
  background-size: 795px 35px, 32px 473px, 26px 473px, 32px 35px, 26px 35px, 0 0, 0 0;
  background-position: 32px 473px, 0 0, 827px 0, 0 473px, 827px 473px, 0 0, 0 0;
}
.dialog { position: absolute; z-index: 5; left: 148px; top: 119px; width: 795px; height: 481px; background: #ededed; box-shadow: 0 0 0 1px rgba(0,0,0,.12); border-radius: 5px 5px 0 0; display: flex; flex-direction: column; color: #4c4c4c; font-size: 9px; letter-spacing: .1px; }
.dlg-title { height: 18px; flex: none; background: linear-gradient(#e9e9e9, #e0e0e0); border-bottom: 1px solid #ccc; border-radius: 5px 5px 0 0; display: flex; align-items: center; justify-content: center; font-size: 10px; position: relative; box-sizing: border-box; }
.lights.color { position: absolute; left: 6px; top: 4px; gap: 6px; }
.lights.color i { background: #ef4f4f; }
.lights.color i:nth-child(2) { background: #f5b53a; }
.lights.color i:nth-child(3) { background: #4ec24a; }
.case-row { height: 17px; flex: none; display: flex; align-items: center; margin-top: 8px; padding-left: 8px; font-size: 9.5px; }
.case-row label { width: 56px; flex: none; }
.case-input { width: 237px; height: 15px; box-sizing: border-box; background: #fff; border: 1px solid #bbb; line-height: 13px; padding-left: 2px; font-size: 9px; }
.add-cond { margin-left: 12px; width: 83px; height: 17px; box-sizing: border-box; background: #c9c9c9; border: 1px solid #b3b3b3; line-height: 15px; text-align: center; font-size: 9.5px; }
.cols { flex: none; display: grid; grid-template-columns: 173px 261px 327px; column-gap: 9px; padding-left: 8px; }
.col h3 { margin: 0; height: 28px; line-height: 32px; font-size: 10px; font-weight: 400; color: #4c4c4c; white-space: nowrap; }
.box { height: 379px; background: #fff; border: 1px solid #ababab; box-sizing: border-box; position: relative; }
.tree { background: #fff; }
.trow { height: 15px; line-height: 14px; position: relative; white-space: nowrap; color: #555; }
.trow .tri { top: 3px; }
.lv0 { padding-left: 21px; font-weight: 700; color: #444; }
.lv0 .tri { left: 4px; }
.lv1 { padding-left: 35px; }
.lv1 .tri { left: 18px; }
.lv1 .tri.down { left: 18px; }
.lv2 { padding-left: 49px; }
.tree-rule { position: absolute; right: 11px; top: 0; bottom: 0; width: 1px; background: #e8e8e8; }
.tree-scroll { position: absolute; right: 1px; top: 2px; width: 6px; height: 328px; background: #777; border-radius: 3px; }
.org { padding-top: 0; }
.case-node { height: 14px; display: flex; align-items: center; position: relative; padding-left: 15px; }
.case-node svg { flex: none; }
.case-node .tri { left: 4px; top: 4px; }
.case-node span { margin-left: 6px; }
.case-act { height: 15px; background: #cfe9ee; display: flex; align-items: center; padding-left: 31px; white-space: nowrap; overflow: hidden; }
.case-act svg { flex: none; }
.case-act span { margin-left: 6px; color: #444; }
.case-act em, .picked em { font-style: normal; color: #3f8f73; }
.org-scroll { position: absolute; left: 3px; bottom: 2px; width: 205px; height: 6px; border-radius: 3px; background: #aaa; }
.conf { padding: 0; }
.conf-head { height: 19px; line-height: 19px; padding-left: 3px; font-size: 10px; color: #4c4c4c; }
.conf-search { height: 15px; display: flex; align-items: center; padding-left: 3px; font-size: 9px; white-space: nowrap; }
.search-in { width: 233px; height: 15px; box-sizing: border-box; background: #fff; border: 1px solid #bbb; font-style: italic; color: #777; line-height: 13px; padding-left: 2px; font-size: 9px; flex: none; }
.conf-search .cb { margin: 0 6px 0 6px; }
.cb { width: 11px; height: 11px; flex: none; box-sizing: border-box; background: #fff; border: 1px solid #a5a5a5; border-radius: 2px; display: flex; align-items: center; justify-content: center; }
.cb.on { background: #4a90e2; border-color: #4a90e2; }
.w-list { height: 215px; margin: 4px 2px 0 2px; box-shadow: inset 0 0 0 1px #c2c2c2; position: relative; overflow: hidden; }
.wrow { height: 15px; display: flex; align-items: center; white-space: nowrap; position: relative; color: #555; }
.w0 { padding-left: 19px; }
.w0 .cb { margin-right: 8px; }
.w0 .tri { left: 6px; top: 5px; border-left-width: 3.500px; border-right-width: 3.500px; border-top-width: 5px; }
.w1 { padding-left: 33px; }
.w1 .cb { margin-right: 8px; }
.picked { background: #cfe9ee; }
.picked em { margin-left: 5px; overflow: hidden; width: 205px; flex: none; }
.wl-vs { position: absolute; right: 3px; top: 3px; width: 6px; height: 198px; background: #aaa; border-radius: 3px; }
.wl-hs { position: absolute; left: 3px; bottom: 3px; width: 276px; height: 6px; background: #999; border-radius: 3px; }
.opt { display: flex; align-items: center; height: 20px; position: relative; font-size: 9.5px; white-space: nowrap; letter-spacing: .12px; }
.o1 { margin-top: 3px; }
.o2 { margin-top: 3px; }
.o3 { margin-top: 6px; }
.o4 { margin-top: 2px; }
.o5 { margin-top: 1px; }
.opt label { padding-left: 7px; flex: none; box-sizing: border-box; }
.lbl-a { width: 53px; } .lbl-e { width: 49px; } .lbl-b { width: 72px; }
.opt .lbl-c { width: 72px; padding-left: 23px; }
.opt .lbl-d { width: 64px; padding-left: 23px; }
.rad { width: 12px; height: 12px; border-radius: 50%; background: #fff; border: 1px solid #9a9a9a; box-sizing: border-box; flex: none; position: relative; }
.rad.on { background: #4a90e2; border-color: #4a90e2; }
.rad.on::after { content: ""; position: absolute; left: 3px; top: 3px; width: 4px; height: 4px; border-radius: 50%; background: #fff; }
.rtxt { margin-left: 5px; margin-right: 0; }
.t-show { width: 32px; } .t-hide { width: 29px; } .t-below { width: 34px; }
.dd { height: 17px; box-sizing: border-box; background: #c9c9c9; border: 1px solid #bcbcbc; line-height: 15px; padding-left: 6px; position: relative; color: #444; overflow: hidden; }
.dd-s { width: 63px; padding-right: 12px; }
.dd-m { width: 102px; }
.dd-w { width: 103px; border-color: #7d98a8; }
.t { margin-left: 8px; width: 11px; }
.num { width: 39px; height: 17px; box-sizing: border-box; background: #fff; border: 1px solid #bbb; line-height: 15px; padding-left: 2px; font-size: 10px; }
.ms { margin-left: 3px; }
.dlg-foot { flex: 1; display: flex; justify-content: flex-end; align-items: flex-start; padding: 10px 15px 0 0; gap: 10px; }
.btn { width: 65px; height: 17px; box-sizing: border-box; background: #fff; border: 1px solid #ccc; border-radius: 4px; text-align: center; line-height: 15px; font-size: 10px; color: #555; }
.ok { width: 67px; background: linear-gradient(#63adf0, #3f8fe2); border-color: #4a95e5; color: #dceeff; }

.ring { position: absolute; z-index: 6; left: 308px; top: 287px; width: 35px; height: 35px; border: 2.500px solid #111; border-radius: 50%; box-sizing: border-box; display: flex; align-items: center; justify-content: center; }
.ring svg { position: relative; left: 0; top: 4px; }
</style>
